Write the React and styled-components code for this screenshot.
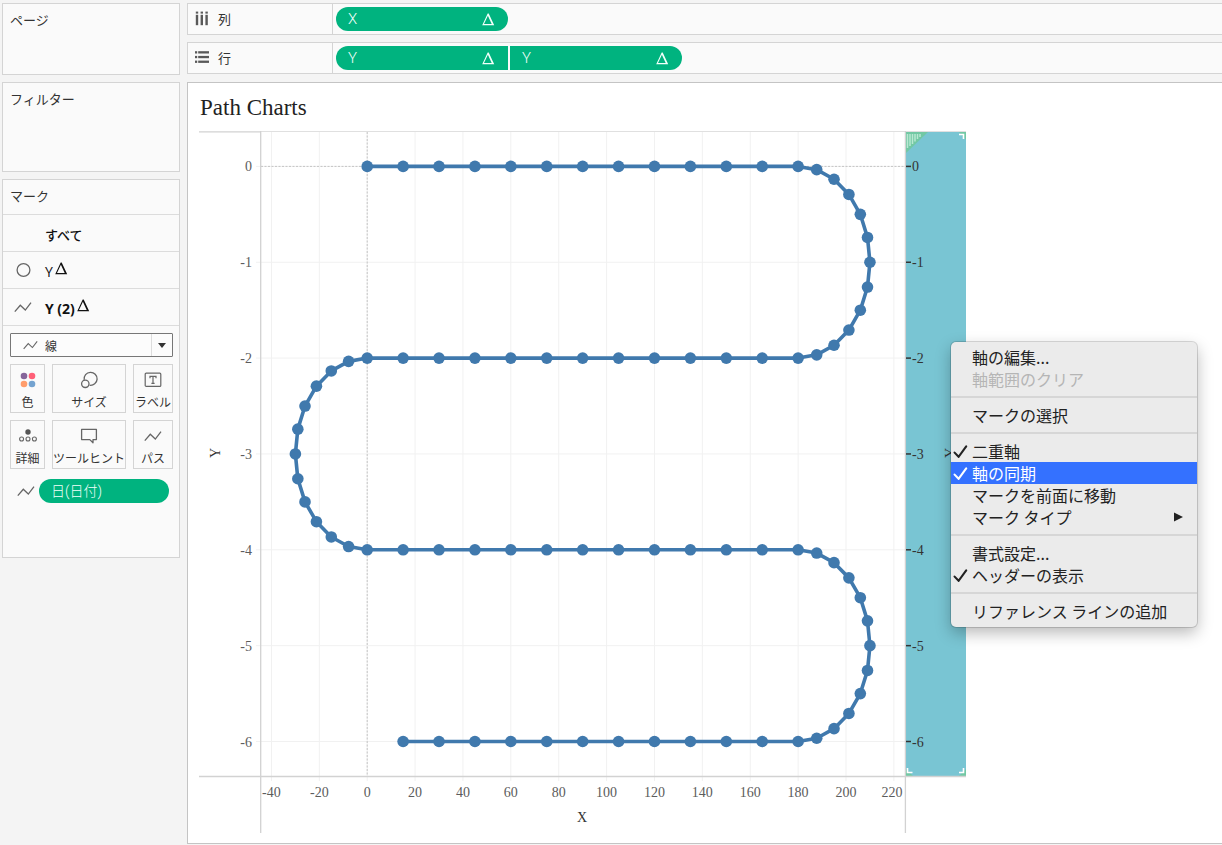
import React from 'react'
import styled, { createGlobalStyle } from 'styled-components'

const LINE = '#4079ad'
const GREEN = '#00b37f'

// Chart scales, in units of the drawing
const xPos = (v) => 168.2 + v * 2.394
const yPos = (v) => 35.4 - v * 95.85

const xTicks = [-40, -20, 0, 20, 40, 60, 80, 100, 120, 140, 160, 180, 200, 220]
const yTicks = [0, -1, -2, -3, -4, -5, -6]

// Straight runs of 15 days, joined by half circles of 15 degree steps
function buildPath() {
    const points = []
    const run = (from, to, y) => {
        const step = from < to ? 15 : -15
        for (let x = from; step > 0 ? x <= to : x >= to; x += step) points.push([x, y])
    }
    const turn = (cx, cy, side) => {
        for (let deg = 15; deg < 180; deg += 15) {
            const rad = (deg * Math.PI) / 180
            points.push([cx + side * 30 * Math.sin(rad), cy + Math.cos(rad)])
        }
    }
    run(0, 180, 0)
    turn(180, -1, 1)
    run(180, 0, -2)
    turn(0, -3, -1)
    run(0, 180, -4)
    turn(180, -5, 1)
    run(180, 15, -6)
    return points.map(([x, y]) => [xPos(x), yPos(y)])
}

const pathPoints = buildPath()

const menuGroups = [
    [{ label: '軸の編集...' }, { label: '軸範囲のクリア', disabled: true }],
    [{ label: 'マークの選択' }],
    [
        { label: '二重軸', checked: true },
        { label: '軸の同期', checked: true, active: true },
        { label: 'マークを前面に移動' },
        { label: 'マーク タイプ', submenu: true },
    ],
    [{ label: '書式設定...' }, { label: 'ヘッダーの表示', checked: true }],
    [{ label: 'リファレンス ラインの追加' }],
]

function Delta() {
    return (
        <svg width='13' height='13' viewBox='0 0 13 13' aria-hidden='true'>
            <path fill='currentColor' fillRule='evenodd' d='M5.7 .4h1L12.2 12.2H.2zM5.9 2.8L2 11h7.7z' />
        </svg>
    )
}

function LineIcon({ width = 18 }) {
    return (
        <svg width={width} height={width * 0.67} viewBox='0 0 18 12' aria-hidden='true'>
            <path d='M.8 10.6L6.3 4.2l5 4.8L17 1.6' fill='none' stroke='#666' strokeWidth='1.3' />
        </svg>
    )
}

function ColumnsIcon() {
    return (
        <svg width='14' height='15' viewBox='0 0 14 15' fill='#595959' aria-hidden='true'>
            {[0.8, 5.6, 10.4].map((x) => (
                <g key={x}>
                    <rect x={x} y='0.6' width='2.4' height='2' />
                    <rect x={x} y='3.8' width='2.4' height='10.4' />
                </g>
            ))}
        </svg>
    )
}

function RowsIcon() {
    return (
        <svg width='14' height='15' viewBox='0 0 14 15' fill='#595959' aria-hidden='true'>
            {[1.2, 5.9, 10.6].map((y) => (
                <g key={y}>
                    <rect x='0' y={y} width='2.2' height='2.3' />
                    <rect x='3.2' y={y} width='10.8' height='2.3' />
                </g>
            ))}
        </svg>
    )
}

function ColorIcon() {
    return (
        <svg width='18' height='18' viewBox='0 0 18 18' aria-hidden='true'>
            <circle cx='5' cy='5' r='3.3' fill='#86659a' />
            <circle cx='13' cy='5' r='3.3' fill='#ff6078' />
            <circle cx='5' cy='13' r='3.3' fill='#ff9d6c' />
            <circle cx='13' cy='13' r='3.3' fill='#74a3d0' />
        </svg>
    )
}

function SizeIcon() {
    return (
        <svg width='18' height='18' viewBox='0 0 18 18' fill='none' stroke='#666' strokeWidth='1.3' aria-hidden='true'>
            <path d='M4.2 8.8A6.5 6.5 0 1 1 9.6 14.2' />
            <circle cx='5.3' cy='12.8' r='3.7' />
        </svg>
    )
}

function LabelIcon() {
    return (
        <svg width='18' height='18' viewBox='0 0 18 18' fill='none' stroke='#666' strokeWidth='1.2' aria-hidden='true'>
            <rect x='1.2' y='2.2' width='15.6' height='13.2' rx='1' />
            <path d='M6 7.2V5.4h6v1.8M9 5.4v7M7.4 12.4h3.2' />
        </svg>
    )
}

function DetailIcon() {
    return (
        <svg width='18' height='18' viewBox='0 0 18 18' aria-hidden='true'>
            <circle cx='9' cy='5' r='2.7' fill='#555' />
            <g fill='none' stroke='#666' strokeWidth='1.1'>
                <circle cx='2.6' cy='12' r='2' />
                <circle cx='9' cy='12' r='2' />
                <circle cx='15.4' cy='12' r='2' />
            </g>
        </svg>
    )
}

function TooltipIcon() {
    return (
        <svg width='18' height='18' viewBox='0 0 18 18' aria-hidden='true'>
            <path d='M1.6 2.4h14.8v10.2h-3.4v3.2l-3.2-3.2H1.6z' fill='none' stroke='#666' strokeWidth='1.3' strokeLinejoin='round' />
        </svg>
    )
}

function CheckIcon() {
    return (
        <svg width='15' height='14' viewBox='0 0 15 14' aria-hidden='true'>
            <path d='M1.6 8.6l4 4.2L13.2 2.4' fill='none' stroke='currentColor' strokeWidth='2.1' strokeLinecap='round' />
        </svg>
    )
}

function PathChart() {
    return (
        <Chart viewBox='0 0 768 703' role='img' aria-label='Path Charts'>
            <rect x='707' y='1' width='60' height='645' fill='#79c5d3' />
            <path d='M707 1h22l-22 21z' fill='#72c8a4' />
            <path d='M708.5 3v14M711 3v12M713.5 3v10M716 3v7.500M718.500 3v5M721 3v3' stroke='#b9e8d2' strokeWidth='1.5' />
            <path d='M760 1h7v8zM767 638v8h-8zM707 638v8h8z' fill='#72c8a4' />
            <path d='M760 3.500h4.500V8M764.500 637v4.500H760M708.500 637v4.500h5' fill='none' stroke='#fff' strokeWidth='1.6' />

            <g stroke='#f1f1f1'>
                {xTicks.map((t) => (
                    <line key={t} x1={xPos(t)} x2={xPos(t)} y1='1' y2='650' />
                ))}
                {yTicks.map((t) => (
                    <line key={t} x1='57' x2='706' y1={yPos(t)} y2={yPos(t)} />
                ))}
            </g>
            <g stroke='#c4c4c4' strokeDasharray='2 1.5'>
                <line x1={xPos(0)} x2={xPos(0)} y1='1' y2='645' />
                <line x1='62' x2='706' y1={yPos(0)} y2={yPos(0)} />
            </g>
            <path d='M62 .5h705' stroke='#e0e0e0' />
            <path d='M0 .8h62M0 645.500h767M61.7 0v702M706.4 0v702' fill='none' stroke='#d2d2d2' strokeWidth='1.3' />

            <polyline points={pathPoints.map((p) => p.join(',')).join(' ')} fill='none' stroke={LINE} strokeWidth='3.6' strokeLinejoin='round' />
            {pathPoints.map(([x, y], i) => (
                <circle key={i} cx={x} cy={y} r='5.8' fill={LINE} />
            ))}

            {xTicks.map((t) => (
                <AxisText key={t} x={t === 220 ? 693 : xPos(t)} y='666' textAnchor='middle'>{t}</AxisText>
            ))}
            {yTicks.map((t) => (
                <React.Fragment key={t}>
                    <AxisText x='53' y={yPos(t) + 5} textAnchor='end'>{t}</AxisText>
                    <path d={`M707 ${yPos(t)}h5`} stroke='#333' strokeWidth='1.5' />
                    <AxisText $dark x='713' y={yPos(t) + 5}>{t}</AxisText>
                </React.Fragment>
            ))}
            <AxisText $dark x='383' y='691' textAnchor='middle'>X</AxisText>
            <AxisText $dark transform='translate(21 322) rotate(-90)' textAnchor='middle'>Y</AxisText>
            <AxisText $dark transform='translate(756 322) rotate(-90)' textAnchor='middle'>Y</AxisText>
        </Chart>
    )
}

function ContextMenu() {
    return (
        <Menu role='menu'>
            {menuGroups.map((group, i) => (
                <MenuGroup key={i}>
                    {group.map((item) => (
                        <MenuItem key={item.label} type='button' role='menuitem' disabled={item.disabled} $active={item.active}>
                            <CheckSlot>{item.checked && <CheckIcon />}</CheckSlot>
                            <span>{item.label}</span>
                            {item.submenu && (
                                <Submenu width='9' height='10' viewBox='0 0 9 10' aria-hidden='true'>
                                    <path d='M0 .4L9 5 0 9.6z' fill='currentColor' />
                                </Submenu>
                            )}
                        </MenuItem>
                    ))}
                </MenuGroup>
            ))}
        </Menu>
    )
}

function App() {
    return (
        <>
            <GlobalStyle />
            <Page>
                <Sidebar>
                    <Card $height={72}>
                        <CardTitle>ページ</CardTitle>
                    </Card>
                    <Card $height={90}>
                        <CardTitle>フィルター</CardTitle>
                    </Card>
                    <Card $height={379}>
                        <CardTitle>マーク</CardTitle>
                        <MarkRow type='button' $strong>
                            <MarkIcon />
                            <MarkName>すべて</MarkName>
                        </MarkRow>
                        <MarkRow type='button'>
                            <MarkIcon>
                                <svg width='18' height='16' viewBox='0 0 18 16' aria-hidden='true'>
                                    <circle cx='9.5' cy='8' r='6.4' fill='none' stroke='#666' strokeWidth='1.3' />
                                </svg>
                            </MarkIcon>
                            <MarkName $latin>Y</MarkName>
                            <RaisedDelta><Delta /></RaisedDelta>
                        </MarkRow>
                        <MarkRow type='button' $bold>
                            <MarkIcon><LineIcon /></MarkIcon>
                            <MarkName $latin>Y (2)</MarkName>
                            <RaisedDelta><Delta /></RaisedDelta>
                        </MarkRow>
                        <MarkPanel>
                            <SelectBox>
                                <SelectIcon><LineIcon width={15} /></SelectIcon>
                                <Select aria-label='マーク タイプ' defaultValue='line'>
                                    <option value='line'>線</option>
                                </Select>
                                <SelectArrow>
                                    <svg width='8' height='5' viewBox='0 0 8 5' aria-hidden='true'>
                                        <path d='M0 0h8L4 5z' fill='#333' />
                                    </svg>
                                </SelectArrow>
                            </SelectBox>
                            <Tiles>
                                <Tile type='button'><ColorIcon />色</Tile>
                                <Tile type='button'><SizeIcon />サイズ</Tile>
                                <Tile type='button'><LabelIcon />ラベル</Tile>
                                <Tile type='button'><DetailIcon />詳細</Tile>
                                <Tile type='button'><TooltipIcon />ツールヒント</Tile>
                                <Tile type='button'><TileLine><LineIcon /></TileLine>パス</Tile>
                            </Tiles>
                            <EncodingRow>
                                <LineIcon />
                                <Pill type='button' $encoding>日(日付)</Pill>
                            </EncodingRow>
                        </MarkPanel>
                    </Card>
                </Sidebar>

                <Main>
                    <Shelf>
                        <ShelfLabel><ColumnsIcon />列</ShelfLabel>
                        <Pills>
                            <Pill type='button'>X<Delta /></Pill>
                        </Pills>
                    </Shelf>
                    <Shelf>
                        <ShelfLabel><RowsIcon />行</ShelfLabel>
                        <Pills>
                            <Pill type='button' $join='right'>Y<Delta /></Pill>
                            <Pill type='button' $join='left'>Y<Delta /></Pill>
                        </Pills>
                    </Shelf>
                    <Sheet>
                        <SheetTitle>Path Charts</SheetTitle>
                        <ChartArea>
                            <PathChart />
                            <ContextMenu />
                        </ChartArea>
                    </Sheet>
                </Main>
            </Page>
        </>
    )
}

export default App


// Styled Components
const GlobalStyle = createGlobalStyle`
    * {
        box-sizing: border-box;
    }

    body {
        margin: 0;
        background: #f4f4f4;
        color: #333;
        font-family: "Noto Sans CJK JP", sans-serif;
        font-size: 13px;
    }

    button, select {
        font: inherit;
        color: inherit;
        margin: 0;
    }

    svg {
        display: block;
        flex: none;
    }
`

const Page = styled.div`
    display: grid;
    grid-template-columns: 178px minmax(0, 1fr);
    gap: 7px;
    min-height: 100vh;
    padding: 3px 0 1px 2px;
    overflow: hidden;
`

const Sidebar = styled.aside`
    display: flex;
    flex-direction: column;
    gap: 7px;
`

const Card = styled.section`
    min-height: ${(props) => props.$height}px;
    border: 1px solid #d4d4d4;
    background: #fafafa;
`

const CardTitle = styled.h2`
    margin: 0;
    padding: 0 7px 2px;
    font-size: 13px;
    font-weight: 400;
    line-height: 32px;
`

const MarkRow = styled.button`
    display: flex;
    align-items: center;
    width: 100%;
    height: 37px;
    padding: 0 0 0 11px;
    border: 0;
    border-top: 1px solid #dcdcdc;
    background: none;
    color: #111;
    font-size: 13px;
    font-weight: ${(props) => (props.$bold ? 700 : props.$strong ? 500 : 400)};
    line-height: 20px;
    text-align: left;
`

const MarkIcon = styled.span`
    display: flex;
    align-items: center;
    width: 31px;
`

const MarkName = styled.span`
    padding-top: 4px;
    font-family: ${(props) => (props.$latin ? '"Open Sans", sans-serif' : 'inherit')};
    font-size: ${(props) => (props.$latin ? 14 : 13)}px;
`

const RaisedDelta = styled.span`
    padding: 0 0 3px 2px;
`

const MarkPanel = styled.div`
    display: grid;
    gap: 7px;
    padding: 7px;
    border-top: 1px solid #dcdcdc;
`

const SelectBox = styled.div`
    display: grid;
    grid-template-columns: 34px 1fr 21px;
    align-items: center;
    height: 24px;
    border: 1px solid #777;
    border-radius: 1px;
    background: #fcfcfc;
`

const SelectIcon = styled.span`
    grid-area: 1 / 1;
    justify-self: end;
    padding-right: 7px;
    pointer-events: none;
    z-index: 1;
`

const Select = styled.select`
    grid-area: 1 / 1 / 2 / 4;
    height: 22px;
    padding: 0 21px 0 34px;
    border: 0;
    background: none;
    appearance: none;
    font-size: 12px;
`

const SelectArrow = styled.span`
    grid-area: 1 / 3;
    display: grid;
    place-items: center;
    height: 22px;
    border-left: 1px solid #ddd;
    pointer-events: none;
`

const Tiles = styled.div`
    display: grid;
    grid-template-columns: 35px 1fr 40px;
    gap: 7px;
`

const Tile = styled.button`
    display: flex;
    flex-direction: column;
    align-items: center;
    gap: 4px;
    height: 49px;
    padding: 6px 0 0;
    border: 1px solid #d4d4d4;
    background: #fafafa;
    font-size: 12px;
    line-height: 17px;
    white-space: nowrap;
`

const TileLine = styled.span`
    display: flex;
    align-items: center;
    height: 18px;
`

const EncodingRow = styled.div`
    display: flex;
    align-items: center;
    gap: 4px;
    padding: 3px 4px 0 7px;
`

const Pill = styled.button`
    display: flex;
    align-items: center;
    justify-content: space-between;
    width: ${(props) => (props.$encoding ? '100%' : '172px')};
    height: 24px;
    padding: 0 13px 0 12px;
    border: 0;
    border-radius: ${(props) => (props.$join === 'right' ? '12px 0 0 12px' : props.$join === 'left' ? '0 12px 12px 0' : '12px')};
    background: ${GREEN};
    color: #f2fffa;
    font-family: Roboto, "Noto Sans CJK JP", sans-serif;
    font-size: ${(props) => (props.$encoding ? 14 : 15)}px;
    font-weight: 300;
    line-height: 22px;
`

const Main = styled.main`
    display: flex;
    flex-direction: column;
    gap: 7px;
`

const Shelf = styled.section`
    display: flex;
    height: 32px;
    border: 1px solid #d4d4d4;
    border-right: 0;
    background: #fafafa;
`

const ShelfLabel = styled.h2`
    display: flex;
    align-items: center;
    gap: 9px;
    width: 145px;
    margin: 0;
    padding: 0 0 2px 7px;
    border-right: 1px solid #d4d4d4;
    font-size: 13px;
    font-weight: 400;
`

const Pills = styled.div`
    display: flex;
    align-items: center;
    gap: 2px;
    padding-left: 3px;
`

const Sheet = styled.section`
    flex: 1;
    margin-top: 1px;
    padding: 11px 0 9px 11px;
    border: 1px solid #c4c4c4;
    border-right: 0;
    background: #fff;
`

const SheetTitle = styled.h1`
    margin: 0 0 9px;
    padding-left: 1px;
    color: #222;
    font-family: "Liberation Serif", serif;
    font-size: 23px;
    font-weight: 400;
    line-height: 28px;
`

const ChartArea = styled.div`
    position: relative;
`

const Chart = styled.svg`
    width: 768px;
    height: 703px;
`

const AxisText = styled.text`
    fill: ${(props) => (props.$dark ? '#333' : '#5c5c5c')};
    font-family: "Liberation Serif", serif;
    font-size: 14px;
`

const Menu = styled.div`
    position: absolute;
    top: 211px;
    left: 752px;
    width: 246px;
    padding: 4px 0 5px;
    border-radius: 5px;
    background: #ebebeb;
    box-shadow: 0 0 0 1px rgb(0 0 0 / 14%),
    0 6px 16px rgb(0 0 0 / 28%);
`

const MenuGroup = styled.div`
    & + & {
        margin-top: 6px;
        padding-top: 6px;
        border-top: 2px solid #d6d6d6;
    }
`

const MenuItem = styled.button`
    display: flex;
    align-items: center;
    width: 100%;
    height: 22px;
    padding: 0 14px 0 2px;
    border: 0;
    background: ${(props) => (props.$active ? '#3471ff' : 'none')};
    color: ${(props) => (props.disabled ? '#b5b5b5' : props.$active ? '#fff' : '#222')};
    font-size: 16px;
    line-height: 22px;
    white-space: nowrap;
`

const CheckSlot = styled.span`
    width: 19px;
`

const Submenu = styled.svg`
    margin-left: auto;
`
